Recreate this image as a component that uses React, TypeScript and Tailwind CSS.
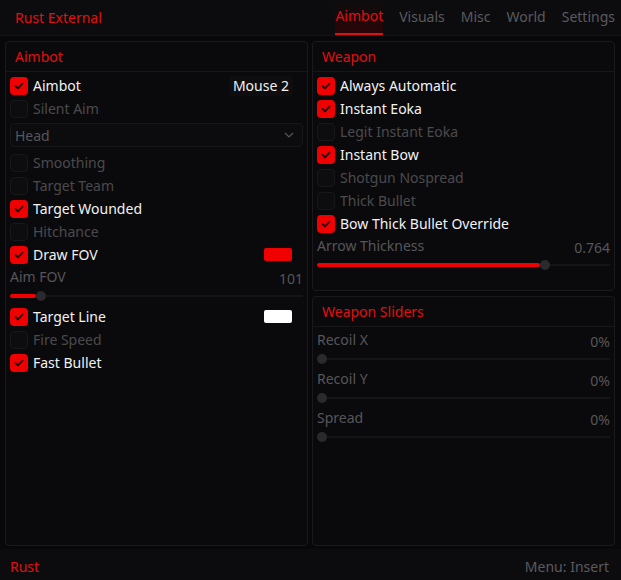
import React from 'react'

const font = { fontFamily: '"Noto Sans", "Open Sans", sans-serif' }

function Check({ on }: { on: boolean }) {
  return (
    <span
      className={`flex h-[18px] w-[18px] shrink-0 items-center justify-center rounded-[4px] ${
        on ? 'bg-[#f00000]' : 'border border-[#18181b] bg-[#0d0d10]'
      }`}
    >
      {on && (
        <svg width="10" height="8" viewBox="0 0 10 8" fill="none">
          <path d="M1.5 4 L4 6.3 L8.5 1.7" stroke="#1a0000" strokeWidth="1.8" strokeLinecap="round" strokeLinejoin="round" />
        </svg>
      )}
    </span>
  )
}

function Row({ label, on, children }: { label: string; on: boolean; children?: React.ReactNode }) {
  return (
    <div className="flex h-[23px] items-center gap-[5px]">
      <Check on={on} />
      <span className={`text-[14px] ${on ? 'text-[#f2f2f2]' : 'text-[#4a4a4d]'}`}>{label}</span>
      <div className="ml-auto flex items-center">{children}</div>
    </div>
  )
}

function Slider({ label, value, pct }: { label: string; value: string; pct: number }) {
  return (
    <div>
      <div className="flex h-[21px] items-end justify-between text-[14px] text-[#56565a]">
        <span className="leading-[20px]">{label}</span>
        <span className="leading-[20px] translate-y-[2px]">{value}</span>
      </div>
      <div className="relative h-[18px]">
        <div className="absolute left-0 right-0 top-[8px] h-[2px] bg-[#151518]" />
        <div className="absolute left-0 top-[7px] h-[4px] rounded-full bg-[#f00000]" style={{ width: `${pct}%` }} />
        <div
          className="absolute top-[4px] h-[10px] w-[10px] -translate-x-1/2 rounded-full bg-[#2a2a2d]"
          style={{ left: `calc(${pct}% + 5px)` }}
        />
      </div>
    </div>
  )
}

function Panel({ title, className, children }: { title: string; className?: string; children: React.ReactNode }) {
  return (
    <div className={`flex flex-col rounded-[4px] border border-[#1a1a1d] bg-[#0a0a0c] ${className ?? ''}`}>
      <div className="flex h-[30px] items-center border-b border-[#17171a] px-[9px] text-[14px] text-[#e01010]">
        {title}
      </div>
      <div className="flex flex-col px-[4px] pt-[2px]">{children}</div>
    </div>
  )
}

export default function App() {
  const tabs = ['Aimbot', 'Visuals', 'Misc', 'World', 'Settings']
  return (
    <div className="flex h-[580px] w-[621px] flex-col bg-[#08080a]" style={font}>
      {/* Title bar */}
      <div className="flex h-[36px] items-stretch border-b border-[#141417] bg-[#0c0c0e] pl-[15px] pr-[6px]">
        <span className="flex items-center pb-[1px] text-[14px] text-[#e01010]">Rust External</span>
        <div className="ml-auto flex items-stretch gap-[16px]">
          {tabs.map((t, i) => (
            <span
              key={t}
              className={`flex items-center pb-[2px] text-[14px] ${
                i === 0
                  ? 'border-b-2 border-[#e01010] bg-gradient-to-t from-[#2a0507] to-transparent text-[#e01010]'
                  : 'text-[#5a5a5e]'
              }`}
            >
              {t}
            </span>
          ))}
        </div>
      </div>

      {/* Content */}
      <div className="flex flex-1 gap-[4px] pb-[3px] pl-[5px] pr-[6px] pt-[5px]">
        <Panel title="Aimbot" className="w-[303px]">
          <Row label="Aimbot" on>
            <span className="mr-[10px] flex h-[20px] items-center rounded-[3px] bg-[#0e0e10] px-[4px] text-[14px] text-[#f2f2f2]">
              Mouse 2
            </span>
          </Row>
          <Row label="Silent Aim" on={false} />
          <div className="mb-[4px] mt-[3px] flex h-[24px] items-center justify-between rounded-[4px] border border-[#17171a] bg-[#0c0c0e] px-[4px] text-[14px] text-[#56565a]">
            <span>Head</span>
            <svg width="10" height="6" viewBox="0 0 10 6" className="mr-[4px]">
              <path d="M1 1 L5 5 L9 1" stroke="#56565a" strokeWidth="1.2" fill="none" />
            </svg>
          </div>
          <Row label="Smoothing" on={false} />
          <Row label="Target Team" on={false} />
          <Row label="Target Wounded" on />
          <Row label="Hitchance" on={false} />
          <Row label="Draw FOV" on>
            <span className="mr-[11px] h-[13px] w-[28px] rounded-[2px] bg-[#f00000]" />
          </Row>
          <Slider label="Aim FOV" value="101" pct={9} />
          <Row label="Target Line" on>
            <span className="mr-[11px] h-[13px] w-[28px] rounded-[2px] bg-white" />
          </Row>
          <Row label="Fire Speed" on={false} />
          <Row label="Fast Bullet" on />
        </Panel>

        <div className="flex flex-1 flex-col gap-[5px]">
          <Panel title="Weapon" className="h-[250px]">
            <Row label="Always Automatic" on />
            <Row label="Instant Eoka" on />
            <Row label="Legit Instant Eoka" on={false} />
            <Row label="Instant Bow" on />
            <Row label="Shotgun Nospread" on={false} />
            <Row label="Thick Bullet" on={false} />
            <Row label="Bow Thick Bullet Override" on />
            <Slider label="Arrow Thickness" value="0.764" pct={76} />
          </Panel>
          <Panel title="Weapon Sliders" className="flex-1">
            <Slider label="Recoil X" value="0%" pct={0} />
            <Slider label="Recoil Y" value="0%" pct={0} />
            <Slider label="Spread" value="0%" pct={0} />
          </Panel>
        </div>
      </div>

      {/* Footer */}
      <div className="flex h-[31px] items-center justify-between bg-[#0c0c0e] px-[10px] pt-[4px] text-[14px]">
        <span className="text-[#e01010]">Rust</span>
        <span className="pr-[2px] text-[#5a5a5e]">Menu: Insert</span>
      </div>
    </div>
  )
}
